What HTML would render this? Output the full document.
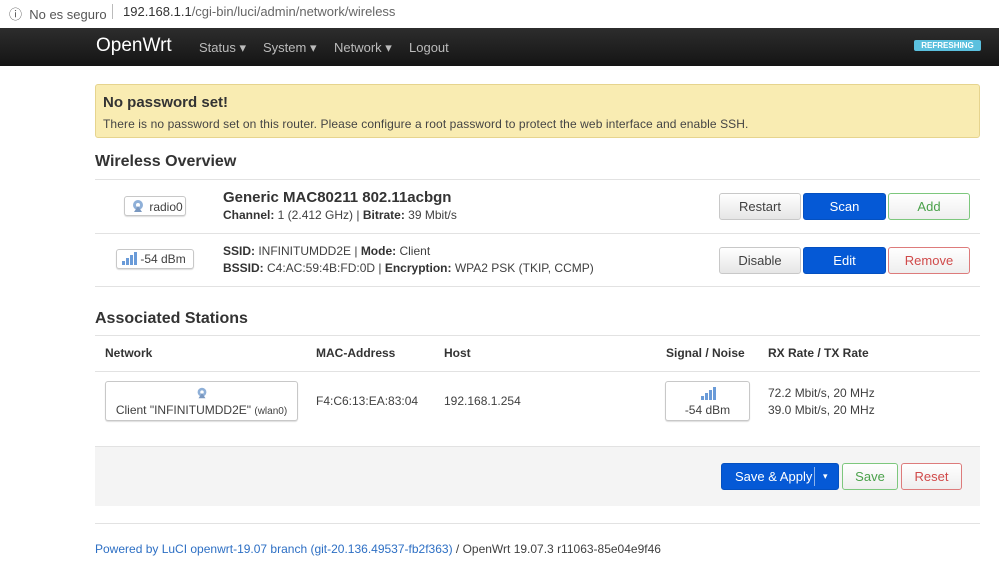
<!DOCTYPE html>
<html><head><meta charset="utf-8"><style>
*{box-sizing:border-box;margin:0;padding:0}
body{width:999px;height:568px;overflow:hidden;background:#fff;font-family:"Liberation Sans",Arial,sans-serif;color:#404040;position:relative}
.a{position:absolute;white-space:nowrap}
.btn{position:absolute;height:27px;border:1px solid #c8c8c8;border-radius:3px;background:linear-gradient(#fff,#e6e6e6);font-size:13px;text-align:center;line-height:25px;color:#404040}
.blue{background:#0559d6;border-color:#0450c0;color:#fff}
.green{border-color:#7dc77d;color:#4aa14a;background:linear-gradient(#fff,#eee)}
.red{border-color:#dd7b7b;color:#d04a4a;background:linear-gradient(#fff,#eee)}
.badge{position:absolute;border:1px solid #c8c8c8;border-radius:3px;background:#fff;font-size:12px;box-shadow:0 1px 1px #ddd}
.hr{position:absolute;left:95px;width:885px;height:1px;background:#e2e2e2}
b{color:#333}
svg{vertical-align:-2px}
</style></head><body>
<div class="a" style="left:0;top:0;width:999px;height:25px;background:#fff"></div>
<div class="a" style="left:9px;top:4px;font-size:13px;color:#555">ⓘ&nbsp; No es seguro</div>
<div class="a" style="left:112px;top:4px;width:1px;height:15px;background:#bbb"></div>
<div class="a" style="left:123px;top:4px;font-size:13px;color:#333">192.168.1.1<span style="color:#666">/cgi-bin/luci/admin/network/wireless</span></div>
<div class="a" style="left:0;top:28px;width:999px;height:38px;background:linear-gradient(#2d2d2d,#141414)"></div>
<div class="a" style="left:96px;top:35px;font-size:19px;color:#fff">OpenWrt</div>
<div class="a" style="left:199px;top:40px;font-size:13px;color:#bbb">Status ▾</div>
<div class="a" style="left:263px;top:40px;font-size:13px;color:#bbb">System ▾</div>
<div class="a" style="left:334px;top:40px;font-size:13px;color:#bbb">Network ▾</div>
<div class="a" style="left:409px;top:40px;font-size:13px;color:#bbb">Logout</div>
<div class="a" style="left:914px;top:40px;width:67px;height:11px;background:#5bc0de;color:#fff;font-size:8px;font-weight:bold;text-align:center;line-height:11px;border-radius:2px">REFRESHING</div>

<div class="a" style="left:95px;top:84px;width:885px;height:54px;background:#f9ecb2;border:1px solid #e6d48e;border-radius:3px"></div>
<div class="a" style="left:103px;top:94px;font-size:15px;font-weight:bold;color:#333">No password set!</div>
<div class="a" style="left:103px;top:117px;font-size:12px;color:#444;letter-spacing:0.1px">There is no password set on this router. Please configure a root password to protect the web interface and enable SSH.</div>

<div class="a" style="left:95px;top:153px;font-size:16px;font-weight:bold;color:#333">Wireless Overview</div>
<div class="hr" style="top:179px"></div>
<div class="badge" style="left:124px;top:196px;width:62px;height:20px;padding:2px 0 0 5px"><svg width="16" height="14" viewBox="0 0 16 14"><circle cx="8" cy="6" r="5" fill="#8fb0d8"/><circle cx="8" cy="6" r="2" fill="#fff"/><path d="M4 13 L8 7 L12 13Z" fill="#7a98c0"/></svg> radio0</div>
<div class="a" style="left:223px;top:189px;font-size:15px;font-weight:bold;color:#333">Generic MAC80211 802.11acbgn</div>
<div class="a" style="left:223px;top:208px;font-size:12px"><b>Channel:</b> 1 (2.412 GHz) | <b>Bitrate:</b> 39 Mbit/s</div>
<div class="btn" style="left:719px;top:193px;width:82px">Restart</div>
<div class="btn blue" style="left:803px;top:193px;width:83px">Scan</div>
<div class="btn green" style="left:888px;top:193px;width:82px">Add</div>
<div class="hr" style="top:233px"></div>
<div class="badge" style="left:116px;top:249px;width:78px;height:20px;padding:2px 0 0 4px"><svg width="16" height="13" viewBox="0 0 16 13"><rect x="1" y="9" width="3" height="4" fill="#6a9bd8"/><rect x="5" y="6" width="3" height="7" fill="#6a9bd8"/><rect x="9" y="3" width="3" height="10" fill="#6a9bd8"/><rect x="13" y="0" width="3" height="13" fill="#6a9bd8"/></svg> -54 dBm</div>
<div class="a" style="left:223px;top:244px;font-size:12px"><b>SSID:</b> INFINITUMDD2E | <b>Mode:</b> Client</div>
<div class="a" style="left:223px;top:261px;font-size:12px"><b>BSSID:</b> C4:AC:59:4B:FD:0D | <b>Encryption:</b> WPA2 PSK (TKIP, CCMP)</div>
<div class="btn" style="left:719px;top:247px;width:82px">Disable</div>
<div class="btn blue" style="left:803px;top:247px;width:83px">Edit</div>
<div class="btn red" style="left:888px;top:247px;width:82px">Remove</div>
<div class="hr" style="top:286px"></div>

<div class="a" style="left:95px;top:310px;font-size:16px;font-weight:bold;color:#333">Associated Stations</div>
<div class="hr" style="top:335px"></div>
<div class="a" style="left:105px;top:346px;font-size:12px;font-weight:bold;color:#333">Network</div>
<div class="a" style="left:316px;top:346px;font-size:12px;font-weight:bold;color:#333">MAC-Address</div>
<div class="a" style="left:444px;top:346px;font-size:12px;font-weight:bold;color:#333">Host</div>
<div class="a" style="left:666px;top:346px;font-size:12px;font-weight:bold;color:#333">Signal / Noise</div>
<div class="a" style="left:768px;top:346px;font-size:12px;font-weight:bold;color:#333">RX Rate / TX Rate</div>
<div class="hr" style="top:371px"></div>
<div class="badge" style="left:105px;top:381px;width:193px;height:40px;text-align:center;padding-top:4px;line-height:16px"><svg width="14" height="14" viewBox="0 0 16 14"><circle cx="8" cy="6" r="5" fill="#8fb0d8"/><circle cx="8" cy="6" r="2" fill="#fff"/><path d="M4 13 L8 7 L12 13Z" fill="#7a98c0"/></svg><br>Client "INFINITUMDD2E" <span style="font-size:10px">(wlan0)</span></div>
<div class="a" style="left:316px;top:394px;font-size:12px">F4:C6:13:EA:83:04</div>
<div class="a" style="left:444px;top:394px;font-size:12px">192.168.1.254</div>
<div class="badge" style="left:665px;top:381px;width:85px;height:40px;text-align:center;padding-top:4px;line-height:16px"><svg width="16" height="13" viewBox="0 0 16 13"><rect x="1" y="9" width="3" height="4" fill="#6a9bd8"/><rect x="5" y="6" width="3" height="7" fill="#6a9bd8"/><rect x="9" y="3" width="3" height="10" fill="#6a9bd8"/><rect x="13" y="0" width="3" height="13" fill="#6a9bd8"/></svg><br>-54 dBm</div>
<div class="a" style="left:768px;top:386px;font-size:12px">72.2 Mbit/s, 20 MHz</div>
<div class="a" style="left:768px;top:403px;font-size:12px">39.0 Mbit/s, 20 MHz</div>

<div class="a" style="left:95px;top:446px;width:885px;height:60px;background:#f4f4f4;border-top:1px solid #e2e2e2"></div>
<div class="btn blue" style="left:721px;top:463px;width:118px;text-align:left;padding-left:13px">Save &amp; Apply<span style="position:absolute;left:92px;top:3px;width:1px;height:19px;background:#8fb4ea"></span><span style="position:absolute;left:101px;top:0;font-size:9px">▾</span></div>
<div class="btn green" style="left:842px;top:463px;width:56px">Save</div>
<div class="btn red" style="left:901px;top:463px;width:61px">Reset</div>
<div class="hr" style="top:523px"></div>
<div class="a" style="left:95px;top:542px;font-size:12px;color:#2d6fc4">Powered by LuCI openwrt-19.07 branch (git-20.136.49537-fb2f363)<span style="color:#404040"> / OpenWrt 19.07.3 r11063-85e04e9f46</span></div>
</body></html>
